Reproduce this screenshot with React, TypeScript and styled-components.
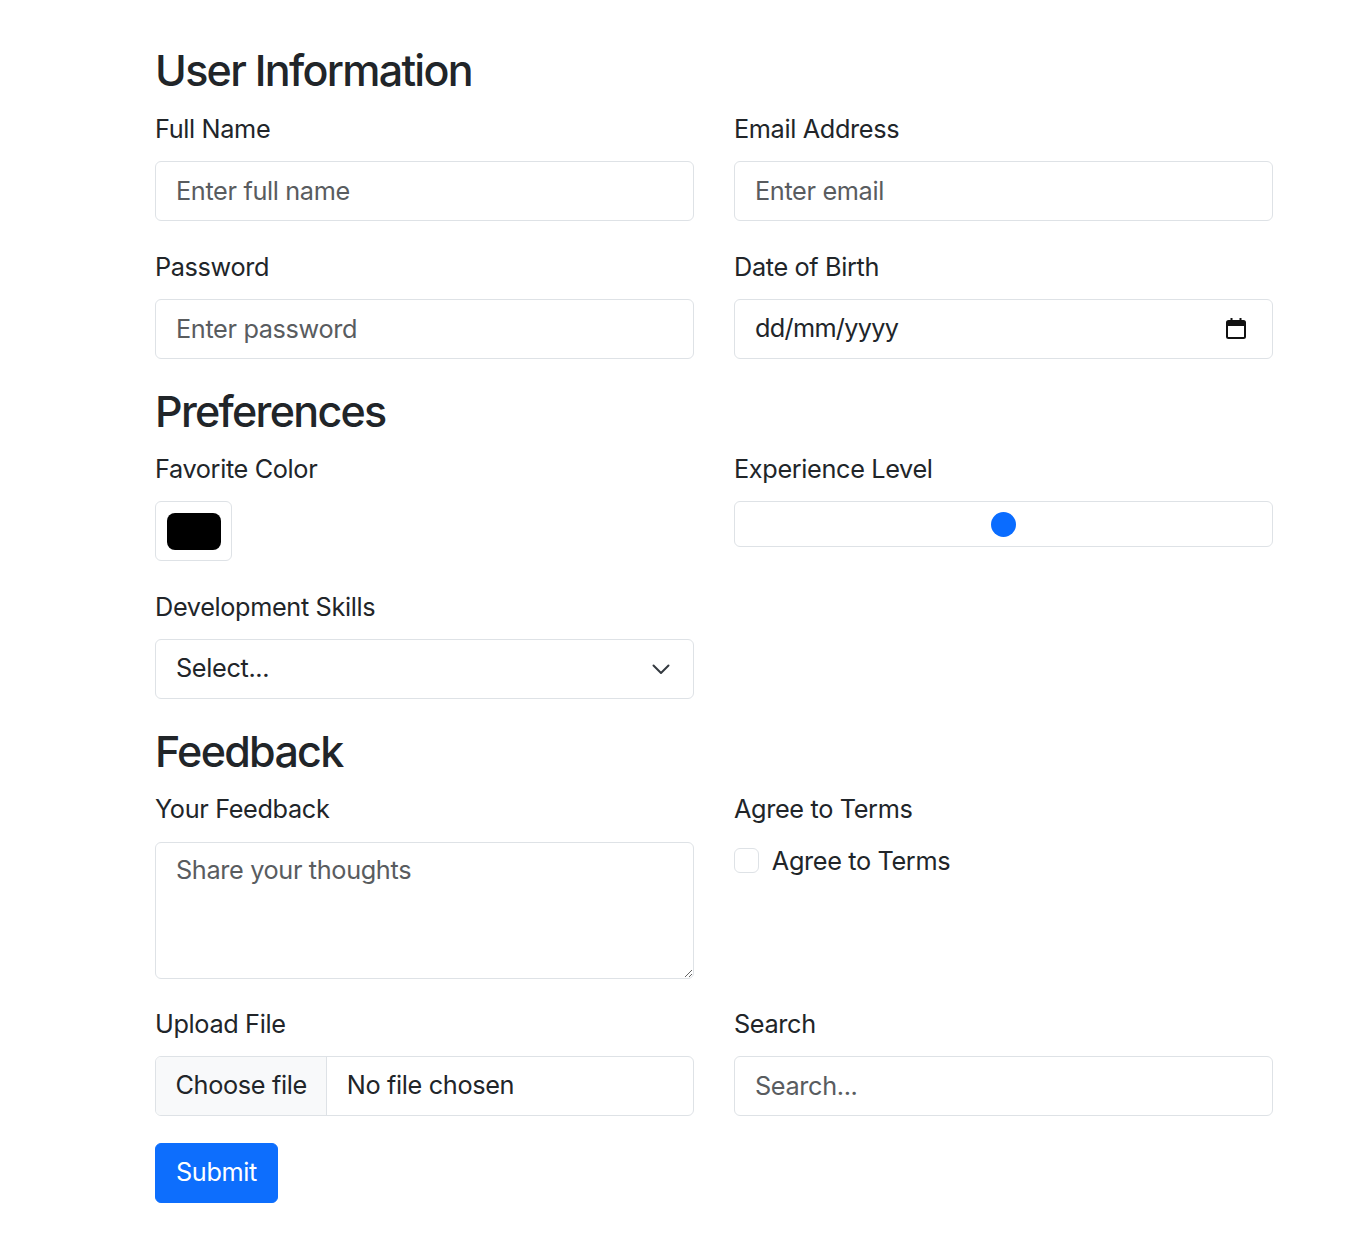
import React from "react";
import styled, { createGlobalStyle } from "styled-components";

const GlobalStyle = createGlobalStyle`
  * { box-sizing: border-box; }
  body {
    margin: 0;
    background: #ffffff;
    color: #212529;
    font-family: Inter, "Noto Sans", "Liberation Sans", sans-serif;
    font-size: 25.28px;
    line-height: 1.5;
    letter-spacing: -0.35px;
  }
`;

const Container = styled.div`
  width: 1118px;
  margin: 0 0 0 155px;
  padding: 45.4px 0 40px;
`;

const Heading = styled.h3`
  margin: 0 0 13px;
  font-size: 43px;
  font-weight: 500;
  line-height: 1.2;
  letter-spacing: -1.7px;
`;

const Row = styled.div`
  display: grid;
  grid-template-columns: 1fr 1fr;
  column-gap: 40px;
`;

const Field = styled.div`
  margin-bottom: 26.6px;
`;

const Label = styled.label`
  display: block;
  margin-bottom: 12.8px;
  line-height: 38.4px;
`;

const TextInput = styled.input`
  display: block;
  width: 100%;
  height: 60px;
  padding: 0 20px;
  font: inherit;
  letter-spacing: inherit;
  color: #212529;
  background: #fff;
  border: 1px solid #dee2e6;
  border-radius: 6px;
  outline: none;
  &::placeholder {
    color: #595c5f;
  }
`;

const DateBox = styled.div`
  display: flex;
  align-items: center;
  justify-content: space-between;
  height: 60px;
  padding: 0 25px 0 20px;
  border: 1px solid #dee2e6;
  border-radius: 6px;
  color: #212529;
  letter-spacing: -0.7px;
`;

const ColorBox = styled.div`
  width: 76.8px;
  height: 60px;
  padding: 11px 10px 10px 11px;
  border: 1px solid #dee2e6;
  border-radius: 6px;
`;

const Swatch = styled.div<{ $color: string }>`
  width: 100%;
  height: 100%;
  border-radius: 8px;
  background: ${(p) => p.$color};
`;

const Range = styled.input`
  display: block;
  width: 100%;
  height: 46px;
  margin: 0;
  padding: 0 20px;
  border: 1px solid #dee2e6;
  border-radius: 6px;
  background: #fff;
  -webkit-appearance: none;
  appearance: none;
  outline: none;
  &::-webkit-slider-runnable-track {
    height: 25px;
    background: transparent;
  }
  &::-webkit-slider-thumb {
    -webkit-appearance: none;
    width: 25px;
    height: 25px;
    border-radius: 50%;
    background: #0a6cff;
    border: none;
  }
`;

const SelectWrap = styled.div`
  position: relative;
`;

const Select = styled.select`
  display: block;
  width: 100%;
  height: 60px;
  padding: 0 60px 0 20px;
  font: inherit;
  letter-spacing: inherit;
  color: #212529;
  background: #fff;
  border: 1px solid #dee2e6;
  border-radius: 6px;
  -webkit-appearance: none;
  appearance: none;
  outline: none;
`;

const Chevron = styled.svg`
  position: absolute;
  right: 24px;
  top: 50%;
  margin-top: -5.5px;
  width: 18px;
  height: 11px;
  pointer-events: none;
`;

const TextArea = styled.textarea`
  display: block;
  width: 100%;
  height: 137px;
  padding: 9px 20px;
  font: inherit;
  letter-spacing: inherit;
  color: #212529;
  border: 1px solid #dee2e6;
  border-radius: 6px;
  outline: none;
  resize: vertical;
  &::placeholder {
    color: #595c5f;
  }
`;

const Check = styled.div`
  display: flex;
  align-items: flex-start;
  gap: 12.8px;
  line-height: 38.4px;
`;

const CheckBox = styled.span`
  flex: none;
  width: 25px;
  height: 25px;
  margin-top: 6.4px;
  border: 1px solid #dee2e6;
  border-radius: 6px;
  background: #fff;
`;

const FileBox = styled.div`
  display: flex;
  height: 60px;
  border: 1px solid #dee2e6;
  border-radius: 6px;
  overflow: hidden;
`;

const FileButton = styled.span`
  display: flex;
  align-items: center;
  padding: 0 19.5px;
  background: #f8f9fa;
  border-right: 1px solid #dee2e6;
`;

const FileName = styled.span`
  display: flex;
  align-items: center;
  padding: 0 19.5px;
`;

const SubmitButton = styled.button`
  height: 60px;
  padding: 0 20px;
  font: inherit;
  letter-spacing: inherit;
  color: #fff;
  background: #0d6efd;
  border: 1px solid #0d6efd;
  border-radius: 6px;
`;

const CalendarIcon = () => (
  <svg width="22" height="23" viewBox="0 0 22 23">
    <rect x="2" y="4" width="18" height="17" rx="1.5" fill="none" stroke="#111" strokeWidth="2" />
    <rect x="2" y="4" width="18" height="5" fill="#111" />
    <rect x="5.5" y="1" width="2" height="4" fill="#111" />
    <rect x="14.5" y="1" width="2" height="4" fill="#111" />
  </svg>
);

export default function App() {
  return (
    <>
      <GlobalStyle />
      <Container>
        <Heading>User Information</Heading>
        <Row>
          <Field>
            <Label>Full Name</Label>
            <TextInput placeholder="Enter full name" />
          </Field>
          <Field>
            <Label>Email Address</Label>
            <TextInput type="email" placeholder="Enter email" />
          </Field>
          <Field>
            <Label>Password</Label>
            <TextInput type="password" placeholder="Enter password" />
          </Field>
          <Field>
            <Label>Date of Birth</Label>
            <DateBox>
              <span>dd/mm/yyyy</span>
              <CalendarIcon />
            </DateBox>
          </Field>
        </Row>

        <Heading>Preferences</Heading>
        <Row>
          <Field>
            <Label>Favorite Color</Label>
            <ColorBox>
              <Swatch $color="#000000" />
            </ColorBox>
          </Field>
          <Field>
            <Label>Experience Level</Label>
            <Range type="range" min={0} max={100} defaultValue={50} />
          </Field>
          <Field>
            <Label>Development Skills</Label>
            <SelectWrap>
              <Select defaultValue="">
                <option value="">Select...</option>
                <option value="react">React</option>
                <option value="node">Node.js</option>
              </Select>
              <Chevron viewBox="0 0 18 11">
                <path d="M1.5 1.5L9 9l7.5-7.5" fill="none" stroke="#343a40" strokeWidth="2" strokeLinecap="round" strokeLinejoin="round" />
              </Chevron>
            </SelectWrap>
          </Field>
        </Row>

        <Heading>Feedback</Heading>
        <Row>
          <Field>
            <Label>Your Feedback</Label>
            <TextArea placeholder="Share your thoughts" />
          </Field>
          <Field>
            <Label>Agree to Terms</Label>
            <Check>
              <CheckBox />
              <span>Agree to Terms</span>
            </Check>
          </Field>
          <Field>
            <Label>Upload File</Label>
            <FileBox>
              <FileButton>Choose file</FileButton>
              <FileName>No file chosen</FileName>
            </FileBox>
          </Field>
          <Field>
            <Label>Search</Label>
            <TextInput type="search" placeholder="Search..." />
          </Field>
        </Row>
        <SubmitButton type="submit">Submit</SubmitButton>
      </Container>
    </>
  );
}
